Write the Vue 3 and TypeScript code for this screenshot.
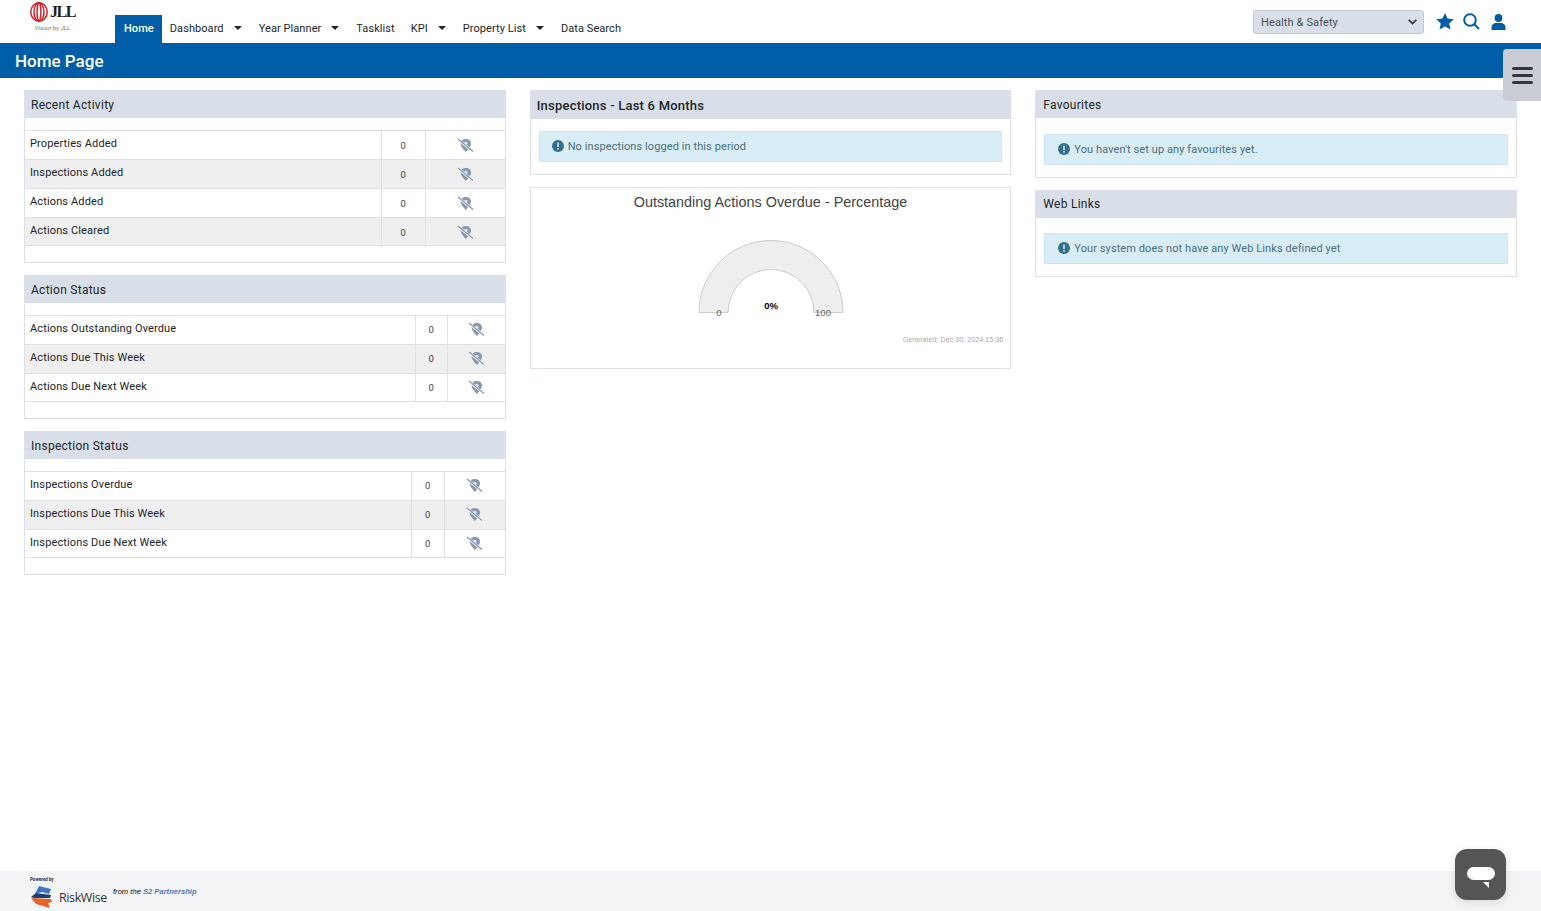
<script setup lang="ts">
interface Row {
  label: string
  value: number
}

interface StatPanel {
  title: string
  valueCol: number
  iconCol: number
  rows: Row[]
}

const navItems = [
  { label: 'Dashboard', caret: true },
  { label: 'Year Planner', caret: true },
  { label: 'Tasklist', caret: false },
  { label: 'KPI', caret: true },
  { label: 'Property List', caret: true },
  { label: 'Data Search', caret: false },
]

const panels: StatPanel[] = [
  {
    title: 'Recent Activity',
    valueCol: 44,
    iconCol: 80,
    rows: [
      { label: 'Properties Added', value: 0 },
      { label: 'Inspections Added', value: 0 },
      { label: 'Actions Added', value: 0 },
      { label: 'Actions Cleared', value: 0 },
    ],
  },
  {
    title: 'Action Status',
    valueCol: 32,
    iconCol: 58,
    rows: [
      { label: 'Actions Outstanding Overdue', value: 0 },
      { label: 'Actions Due This Week', value: 0 },
      { label: 'Actions Due Next Week', value: 0 },
    ],
  },
  {
    title: 'Inspection Status',
    valueCol: 33,
    iconCol: 61,
    rows: [
      { label: 'Inspections Overdue', value: 0 },
      { label: 'Inspections Due This Week', value: 0 },
      { label: 'Inspections Due Next Week', value: 0 },
    ],
  },
]
</script>

<template>
  <div class="page">
    <header class="topbar">
      <div class="brand">
        <div class="brand-top">
          <svg width="18" height="20" viewBox="0 0 18 20" fill="none" stroke="#d2232a" stroke-width="1.5">
            <ellipse cx="9" cy="10" rx="8.200" ry="9.200" />
            <ellipse cx="9" cy="10" rx="5" ry="9.200" />
            <ellipse cx="9" cy="10" rx="1.900" ry="9.200" />
          </svg>
          <span class="brand-name">JLL</span>
        </div>
        <span class="brand-tag">Vision by JLL</span>
      </div>

      <nav class="nav">
        <a class="nav-home">Home</a>
        <a v-for="item in navItems" :key="item.label" class="nav-item">
          {{ item.label }}<i v-if="item.caret" class="caret"></i>
        </a>
      </nav>

      <div class="tools">
        <div class="module-select">
          <span>Health &amp; Safety</span>
          <svg width="9" height="6" viewBox="0 0 9 6" fill="none" stroke="#343a40" stroke-width="1.8">
            <path d="M.7.8l3.800 3.800L8.300.8" />
          </svg>
        </div>
        <svg class="tool-star" width="18" height="17" viewBox="0 0 18 17" fill="#005da8">
          <path d="M9 0l2.600 5.600 6.200.7-4.600 4.200 1.300 6.100L9 13.500l-5.500 3.100 1.300-6.100L.2 6.300l6.200-.7z" />
        </svg>
        <svg class="tool-search" width="17" height="17" viewBox="0 0 17 17" fill="none" stroke="#005da8" stroke-width="2">
          <circle cx="7" cy="7" r="5.800" />
          <line x1="11.200" y1="11.200" x2="16" y2="16" />
        </svg>
        <svg class="tool-user" width="15" height="16" viewBox="0 0 15 16" fill="#005da8">
          <circle cx="7.500" cy="4" r="3.900" />
          <path d="M.5 16v-2.500C.5 10.500 3 9 5 9h5c2 0 4.500 1.500 4.500 4.500V16z" />
        </svg>
      </div>
    </header>

    <div class="title-bar">Home Page</div>

    <button class="side-toggle" type="button" aria-label="Menu">
      <span></span><span></span><span></span>
    </button>

    <main class="columns">
      <section class="column">
        <div v-for="panel in panels" :key="panel.title" class="card">
          <h2 class="card-head">{{ panel.title }}</h2>
          <div class="stat-body">
            <div
              v-for="row in panel.rows"
              :key="row.label"
              class="stat-row"
              :style="{ gridTemplateColumns: `1fr ${panel.valueCol}px ${panel.iconCol}px` }"
            >
              <span class="stat-label">{{ row.label }}</span>
              <span class="stat-value">{{ row.value }}</span>
              <span class="stat-icon">
                <svg width="17" height="15" viewBox="0 0 17 15">
                  <path fill="#8797b0" d="M8.800 1C12 1 14 3 14 5.600c0 2.600-2.800 6-5.200 8.400C6.400 11.600 3.600 8.200 3.600 5.600 3.600 3 5.800 1 8.800 1z" />
                  <circle cx="8.800" cy="5.600" r="1.800" fill="#dfe4ec" />
                  <line x1="1" y1="1.500" x2="16" y2="13.500" stroke="#fff" stroke-width="2.400" />
                  <line x1="1" y1="1" x2="16" y2="13.500" stroke="#8797b0" stroke-width="1.300" />
                </svg>
              </span>
            </div>
          </div>
        </div>
      </section>

      <section class="column">
        <div class="card card-inspections">
          <h2 class="card-head card-head-wide">Inspections - Last 6 Months</h2>
          <div class="notice">
            <svg width="12" height="12" viewBox="0 0 12 12">
              <circle cx="6" cy="6" r="6" fill="#31708f" />
              <rect x="5.200" y="2.500" width="1.600" height="4.500" fill="#d9edf7" />
              <rect x="5.200" y="8" width="1.600" height="1.600" fill="#d9edf7" />
            </svg>
            No inspections logged in this period
          </div>
        </div>

        <div class="card gauge-card">
          <div class="gauge-title">Outstanding Actions Overdue - Percentage</div>
          <svg class="gauge" width="160" height="90" viewBox="-1 0 160 90">
            <path
              d="M8 73.500a72 72 0 0 1 144 0h-29a43 43 0 0 0-86 0z"
              fill="#eeeeee"
              stroke="#cccccc"
              stroke-width="1"
            />
            <text x="28" y="77" class="gauge-scale" text-anchor="middle">0</text>
            <text x="132" y="77" class="gauge-scale" text-anchor="middle">100</text>
            <text x="80" y="70" class="gauge-value" text-anchor="middle">0%</text>
          </svg>
          <div class="gauge-stamp">Generated: Dec 30, 2024 15:36</div>
        </div>
      </section>

      <section class="column">
        <div class="card card-info">
          <h2 class="card-head">Favourites</h2>
          <div class="notice">
            <svg width="12" height="12" viewBox="0 0 12 12">
              <circle cx="6" cy="6" r="6" fill="#31708f" />
              <rect x="5.200" y="2.500" width="1.600" height="4.500" fill="#d9edf7" />
              <rect x="5.200" y="8" width="1.600" height="1.600" fill="#d9edf7" />
            </svg>
            You haven't set up any favourites yet.
          </div>
        </div>
        <div class="card card-info">
          <h2 class="card-head">Web Links</h2>
          <div class="notice">
            <svg width="12" height="12" viewBox="0 0 12 12">
              <circle cx="6" cy="6" r="6" fill="#31708f" />
              <rect x="5.200" y="2.500" width="1.600" height="4.500" fill="#d9edf7" />
              <rect x="5.200" y="8" width="1.600" height="1.600" fill="#d9edf7" />
            </svg>
            Your system does not have any Web Links defined yet
          </div>
        </div>
      </section>
    </main>

    <footer class="footer">
      <div class="rw-logo">
        <span class="rw-powered">Powered by</span>
        <div class="rw-row">
          <svg width="24" height="24" viewBox="0 0 24 24">
            <path d="M9 1l12 3-2 5-7-2-7 2z" fill="#3a78c2" />
            <path d="M1 12l5-4 15 2-1 3H4z" fill="#1d3f70" />
            <path d="M1 13l20 1 1 3-4 1 2 5-14-4z" fill="#e8622a" />
          </svg>
          <span class="rw-name">RiskWise</span>
        </div>
      </div>
      <div class="rw-from">from the <b>S2 Partnership</b></div>
    </footer>

    <button class="chat" type="button" aria-label="Chat">
      <span class="chat-bubble"></span>
    </button>
  </div>
</template>

<style scoped>
.page {
  position: relative;
  display: flex;
  flex-direction: column;
  min-height: 911px;
  font-family: Roboto, 'Liberation Sans', sans-serif;
  color: #212529;
  background: #fff;
}

.topbar {
  display: flex;
  align-items: flex-end;
  height: 43px;
}

.brand {
  display: flex;
  flex-direction: column;
  align-items: center;
  width: 45px;
  height: 43px;
  margin-left: 30px;
  padding-top: 2px;
  box-sizing: border-box;
}

.brand-top {
  display: flex;
  align-items: center;
  gap: 2px;
}

.brand-name {
  font-family: 'Liberation Serif', serif;
  font-size: 16px;
  font-weight: 700;
  color: #1c1c1c;
  letter-spacing: -1.5px;
}

.brand-tag {
  margin-top: 2px;
  font-size: 6px;
  color: #777;
}

.nav {
  display: flex;
  align-items: stretch;
  height: 28px;
  margin-left: 40px;
  font-size: 11px;
  letter-spacing: 0.07px;
}

.nav-home {
  display: flex;
  align-items: center;
  padding: 0 8px 2px 9px;
  background: #005da8;
  color: #fff;
  font-weight: 500;
}

.nav-item {
  display: flex;
  align-items: center;
  padding: 0 8px 2px;
  color: #212529;
}

.caret {
  width: 0;
  height: 0;
  margin-left: 10px;
  margin-right: 1px;
  border-top: 4px solid #212529;
  border-left: 4px solid transparent;
  border-right: 4px solid transparent;
}

.tools {
  display: flex;
  align-items: center;
  height: 43px;
  margin-left: auto;
  margin-right: 35px;
}

.module-select {
  display: flex;
  align-items: center;
  justify-content: space-between;
  box-sizing: border-box;
  width: 171px;
  height: 24px;
  padding: 1px 6px 0 7px;
  background: #d9dfe8;
  border: 1px solid #c4c8d0;
  border-radius: 3px;
  font-size: 11px;
  letter-spacing: 0.12px;
  color: #495057;
}

.tool-star {
  margin-left: 12px;
}

.tool-search {
  margin-left: 9px;
}

.tool-user {
  margin-left: 11px;
}

.title-bar {
  height: 35px;
  padding-left: 15px;
  background: #005da8;
  color: #fff;
  font-size: 17px;
  font-weight: 500;
  line-height: 36px;
}

.side-toggle {
  position: absolute;
  top: 49px;
  right: 0;
  display: flex;
  flex-direction: column;
  justify-content: center;
  gap: 4px;
  width: 38px;
  height: 52px;
  padding: 0 0 0 9px;
  background: #c9ccd3;
  border: none;
  border-radius: 4px 0 0 4px;
}

.side-toggle span {
  display: block;
  width: 21px;
  height: 3px;
  border-radius: 2px;
  background: #33373d;
}

.columns {
  display: grid;
  grid-template-columns: repeat(3, 1fr);
  gap: 24px;
  align-items: start;
  padding: 12px 24px 0;
}

.column {
  display: flex;
  flex-direction: column;
  gap: 12px;
}

.card {
  border: 1px solid #dbe1e8;
  background: #fff;
}

.card-head {
  height: 27px;
  margin: 0;
  padding-left: 6px;
  background: #d9dfe8;
  font-size: 12px;
  font-weight: 400;
  line-height: 28px;
  letter-spacing: 0.27px;
  color: #212529;
}

.card-head-wide {
  height: 28px;
  font-size: 13px;
  font-weight: 500;
  line-height: 29px;
  letter-spacing: 0.22px;
}

.stat-body {
  padding: 12px 0 16px;
}

.stat-row {
  display: grid;
  height: 29px;
  box-sizing: border-box;
  border-top: 1px solid #dee2e6;
  font-size: 11px;
  letter-spacing: 0.13px;
}

.stat-row:last-child {
  border-bottom: 1px solid #dee2e6;
}

.stat-row:nth-child(even) {
  background: #efefef;
}

.stat-label {
  padding-left: 5px;
  line-height: 25px;
}

.stat-value {
  border-left: 1px solid #dee2e6;
  text-align: center;
  font-size: 9.500px;
  line-height: 29px;
  color: #444;
}

.stat-icon {
  display: flex;
  align-items: center;
  justify-content: center;
  border-left: 1px solid #dee2e6;
}

.card + .card .stat-value {
  line-height: 27px;
}

.card + .card .stat-icon {
  padding-bottom: 1px;
}

.notice {
  display: flex;
  align-items: center;
  gap: 4px;
  height: 31px;
  box-sizing: border-box;
  padding: 0 0 1px 12px;
  background: #d9edf7;
  border: 1px solid #d0e7f3;
  font-size: 11px;
  letter-spacing: 0.09px;
  color: #4a6f82;
}

.card-inspections {
  height: 85px;
  box-sizing: border-box;
}

.card-inspections .notice {
  margin: 12px 8px 0;
}

.card-info {
  height: 88px;
  box-sizing: border-box;
}

.card-info .card-head {
  padding-left: 7px;
}

.card-info .notice {
  margin: 16px 8px 0;
  padding-left: 13px;
}

.card-info + .card-info {
  height: 87px;
}

.card-info + .card-info .card-head {
  line-height: 26px;
}

.card-info + .card-info .notice {
  margin-top: 15px;
}

.gauge-card {
  position: relative;
  height: 182px;
  box-sizing: border-box;
  padding-top: 6px;
  text-align: center;
}

.gauge-title {
  font-family: 'Liberation Sans', sans-serif;
  font-size: 14.400px;
  line-height: 16px;
  color: #444;
}

.gauge {
  display: block;
  margin: 29px auto 0;
}

.gauge-scale {
  font-family: 'Liberation Sans', sans-serif;
  font-size: 9.500px;
  fill: #666;
}

.gauge-value {
  font-family: 'Liberation Sans', sans-serif;
  font-size: 9.500px;
  font-weight: 700;
  fill: #000;
}

.gauge-stamp {
  position: absolute;
  right: 7px;
  bottom: 24px;
  font-family: 'Liberation Sans', sans-serif;
  font-size: 7.200px;
  color: #aaa;
}

.footer {
  display: flex;
  align-items: flex-start;
  height: 40px;
  margin-top: auto;
  padding-left: 30px;
  background: #f3f4f5;
}

.rw-logo {
  width: 83px;
  padding-top: 6px;
}

.rw-powered {
  display: block;
  font-size: 4.500px;
  font-weight: 700;
  line-height: 5px;
  color: #333;
}

.rw-row {
  display: flex;
  align-items: center;
  gap: 5px;
  padding-top: 3px;
}

.rw-name {
  margin-top: 1px;
  font-family: 'Open Sans', sans-serif;
  font-size: 12.500px;
  letter-spacing: -0.4px;
  color: #333;
}

.rw-from {
  padding-top: 16px;
  font-family: 'Liberation Sans', sans-serif;
  font-size: 7.600px;
  font-style: italic;
  color: #111;
}

.rw-from b {
  color: #4a7ebb;
}

.chat {
  position: fixed;
  right: 35px;
  bottom: 11px;
  display: flex;
  align-items: center;
  justify-content: center;
  width: 51px;
  height: 51px;
  padding: 0;
  background: #555;
  border: none;
  border-radius: 12px;
  box-shadow: 0 2px 10px rgba(0, 0, 0, 0.12);
}

.chat-bubble {
  position: relative;
  display: block;
  width: 28px;
  height: 13px;
  margin-top: -3px;
  border-radius: 7px;
  background: #fff;
}

.chat-bubble::after {
  content: '';
  position: absolute;
  right: 6px;
  bottom: -8px;
  border-top: 6px solid #fff;
  border-left: 6px solid transparent;
}
</style>

<style>
html,
body {
  margin: 0;
  background: #fff;
}
</style>
